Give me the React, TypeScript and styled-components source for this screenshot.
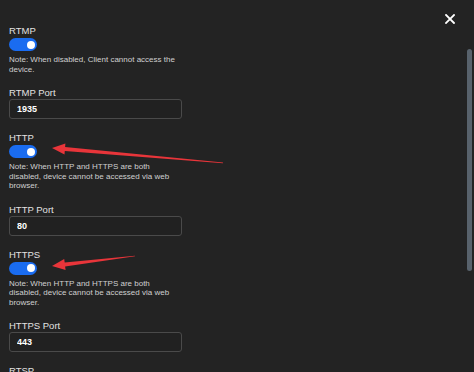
import { createGlobalStyle, styled } from "styled-components";

const GlobalStyle = createGlobalStyle`
  html, body {
    margin: 0;
    padding: 0;
    background: #232323;
  }
  * {
    box-sizing: border-box;
  }
`;

const Panel = styled.div`
  position: relative;
  width: 474px;
  height: 372px;
  overflow: hidden;
  background: #232323;
  font-family: "Liberation Sans", Arial, sans-serif;
`;

const Content = styled.div`
  display: flex;
  flex-direction: column;
  width: 173px;
  margin-left: 9px;
  padding-top: 25px;
`;

const Section = styled.div`
  display: flex;
  flex-direction: column;
  margin-bottom: 13px;
`;

const Label = styled.div`
  font-size: 9.5px;
  line-height: 12px;
  color: #e2e2e2;
`;

const Toggle = styled.div<{ $on: boolean }>`
  position: relative;
  width: 28px;
  height: 13px;
  margin-top: 1px;
  border-radius: 7px;
  background: ${(p) => (p.$on ? "#1a6cf0" : "#555")};

  &::after {
    content: "";
    position: absolute;
    top: 2.5px;
    ${(p) => (p.$on ? "right: 2px;" : "left: 2px;")}
    width: 8px;
    height: 8px;
    border-radius: 50%;
    background: #fff;
  }
`;

const Note = styled.p`
  margin: 4px 0 13px;
  font-size: 8px;
  line-height: 9.5px;
  color: #d0d0d0;
`;

const PortInput = styled.input`
  width: 173px;
  height: 20px;
  padding: 0 7px;
  border: 1px solid #4a4a4a;
  border-radius: 3px;
  background: #212121;
  color: #fff;
  font-family: "Liberation Sans", Arial, sans-serif;
  font-size: 9px;
  font-weight: 700;
  outline: none;
`;

const CloseButton = styled.button`
  position: absolute;
  top: 14px;
  left: 445px;
  width: 10px;
  height: 10px;
  padding: 0;
  border: 0;
  background: none;
  cursor: pointer;
  display: flex;
`;

const ScrollThumb = styled.div`
  position: absolute;
  left: 467px;
  top: 49px;
  width: 5px;
  height: 222px;
  border-radius: 3px;
  background: #58626c;
`;

const Annotations = styled.svg`
  position: absolute;
  inset: 0;
  pointer-events: none;
`;

const sections = [
  {
    name: "RTMP",
    note: "Note: When disabled, Client cannot access the device.",
    port: "1935",
  },
  {
    name: "HTTP",
    note: "Note: When HTTP and HTTPS are both disabled, device cannot be accessed via web browser.",
    port: "80",
  },
  {
    name: "HTTPS",
    note: "Note: When HTTP and HTTPS are both disabled, device cannot be accessed via web browser.",
    port: "443",
  },
];

export default function App() {
  return (
    <>
      <GlobalStyle />
      <Panel>
        <CloseButton aria-label="close">
          <svg width="10" height="10" viewBox="0 0 10 10">
            <path d="M1 1 L9 9 M9 1 L1 9" stroke="#fff" strokeWidth="1.8" strokeLinecap="square" />
          </svg>
        </CloseButton>
        <Content>
          {sections.map((s) => (
            <Section key={s.name}>
              <Label>{s.name}</Label>
              <Toggle $on={true} />
              <Note>{s.note}</Note>
              <Label>{s.name} Port</Label>
              <PortInput defaultValue={s.port} />
            </Section>
          ))}
          <Label>RTSP</Label>
        </Content>
        <ScrollThumb />
        {/* red arrows pointing at the toggles */}
        <Annotations width="474" height="372" viewBox="0 0 474 372">
          <polygon
            points="52,148 65.4,143.6 65.1,147.1 223,162.6 223,163.2 64.8,151.1 64.5,154.6"
            fill="#e8353a"
          />
          <polygon
            points="52,266 64.2,259 64.7,262.5 135,255.7 135,256.3 65.1,266.4 65.6,269.9"
            fill="#e8353a"
          />
        </Annotations>
      </Panel>
    </>
  );
}
